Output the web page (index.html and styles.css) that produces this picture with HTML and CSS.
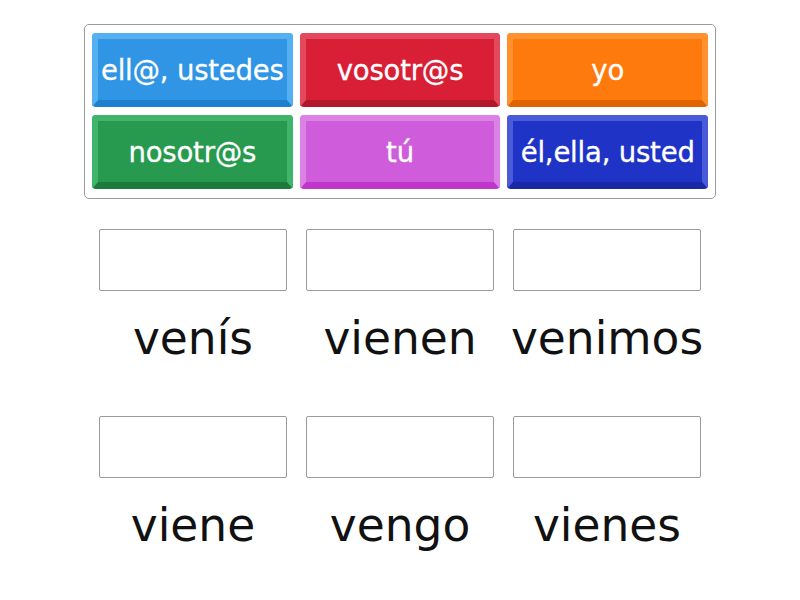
FILE: index.html
```html
<!DOCTYPE html>
<html lang="es">
<head>
<meta charset="utf-8">
<title>Venir</title>
<link rel="stylesheet" href="styles.css">
</head>
<body>
<div class="page">
  <div class="bank">
    <div class="tile blue">ell@, ustedes</div>
    <div class="tile red">vosotr@s</div>
    <div class="tile orange">yo</div>
    <div class="tile green">nosotr@s</div>
    <div class="tile purple">tú</div>
    <div class="tile navy">él,ella, usted</div>
  </div>
  <div class="drops">
    <div class="cell"><div class="slot"></div><div class="word">venís</div></div>
    <div class="cell"><div class="slot"></div><div class="word">vienen</div></div>
    <div class="cell"><div class="slot"></div><div class="word">venimos</div></div>
    <div class="cell"><div class="slot"></div><div class="word">viene</div></div>
    <div class="cell"><div class="slot"></div><div class="word">vengo</div></div>
    <div class="cell"><div class="slot"></div><div class="word">vienes</div></div>
  </div>
</div>
</body>
</html>
```

FILE: styles.css
```css
html, body {
  margin: 0;
  padding: 0;
  background: #ffffff;
}

.page {
  width: 800px;
  height: 600px;
  padding-top: 24px;
  box-sizing: border-box;
  font-family: "DejaVu Sans", "Lato", sans-serif;
}

.bank {
  width: 632px;
  margin: 0 auto;
  box-sizing: border-box;
  border: 1px solid #9a9a9a;
  border-radius: 5px;
  padding: 8px 7px 9px 7px;
  display: grid;
  grid-template-columns: repeat(3, 1fr);
  column-gap: 7px;
  row-gap: 8px;
}

.tile {
  height: 74px;
  box-sizing: border-box;
  border-radius: 4px;
  border-style: solid;
  border-width: 6px 6px 7px 6px;
  display: flex;
  align-items: center;
  justify-content: center;
  color: #ffffff;
  font-size: 27.5px;
  white-space: nowrap;
  letter-spacing: -0.2px;
  -webkit-text-stroke: 0.3px #ffffff;
}

.blue   { background: #2f95e4; border-color: #55b0f2 #55b0f2 #1f7fcf #55b0f2; }
.red    { background: #d81f36; border-color: #e2495c #e2495c #b3172b #e2495c; }
.orange { background: #ff7a0c; border-color: #ff922f #ff922f #e06500 #ff922f; }
.green  { background: #279a4f; border-color: #3fb56c #3fb56c #1c7a3c #3fb56c; }
.purple { background: #cf5ddb; border-color: #dc82e5 #dc82e5 #c036cb #dc82e5; }
.navy   { background: #1f33c7; border-color: #4a5ad9 #4a5ad9 #1a28a6 #4a5ad9; }

.drops {
  margin: 30px auto 0;
  width: 602px;
  display: grid;
  grid-template-columns: repeat(3, 188px);
  column-gap: 19px;
  row-gap: 44px;
}

.cell {
  display: flex;
  flex-direction: column;
  align-items: center;
}

.slot {
  width: 188px;
  height: 62px;
  box-sizing: border-box;
  border: 1.5px solid #9a9a9a;
  border-radius: 2px;
}

.word {
  margin-top: 18px;
  height: 63px;
  line-height: 60px;
  font-size: 45.5px;
  color: #111111;
  white-space: nowrap;
}
```
